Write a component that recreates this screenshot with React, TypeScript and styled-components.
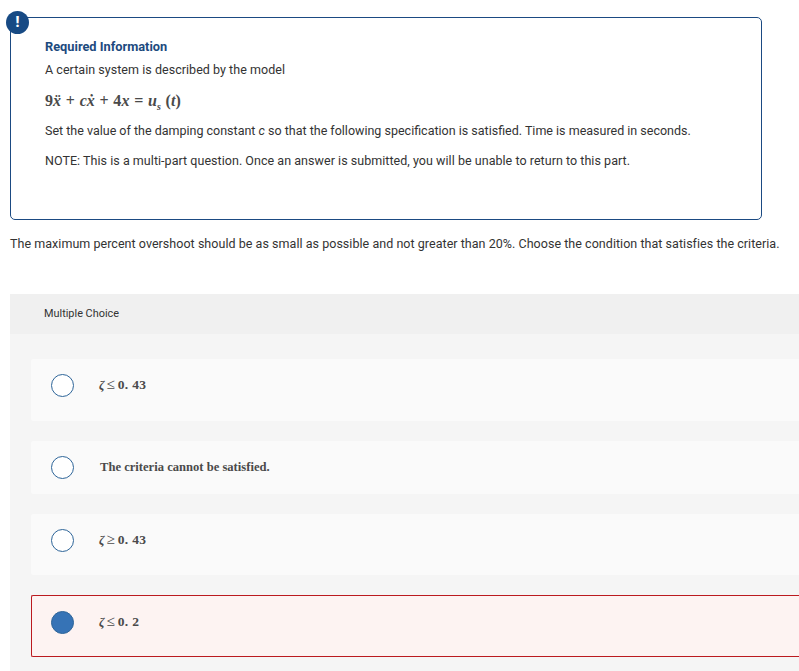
import React from "react";
import styled, { createGlobalStyle } from "styled-components";

const Global = createGlobalStyle`
  html, body { margin: 0; padding: 0; background: #fff; overflow: hidden; }
  #root { width: 799px; height: 671px; overflow: hidden; }
`;

const Page = styled.div`
  width: 799px;
  height: 671px;
  padding: 17px 0 0 10px;
  box-sizing: border-box;
  font-family: Roboto, Lato, sans-serif;
  font-size: 12.5px;
  color: #333;
  overflow: hidden;
`;

const InfoBox = styled.section`
  position: relative;
  box-sizing: border-box;
  width: 752px;
  height: 203px;
  border: 1px solid #1b4a82;
  border-radius: 5px;
  padding: 20px 34px 0;
`;

const Badge = styled.div`
  position: absolute;
  left: -5px;
  top: -7px;
  width: 23px;
  height: 23px;
  border-radius: 50%;
  background: #174a84;
  color: #fff;
  font-weight: 900;
  font-size: 14px;
  line-height: 22px;
  text-align: center;
`;

const Title = styled.h3`
  margin: 0;
  font-size: 12.8px;
  line-height: 17px;
  font-weight: 700;
  color: #1c4a7e;
`;

const Para = styled.p<{ $top: number; $track?: number }>`
  margin: ${(p) => p.$top}px 0 0;
  line-height: 17px;
  letter-spacing: ${(p) => p.$track ?? 0.04}px;
  white-space: nowrap;
`;

const Equation = styled.div`
  margin-top: 13px;
  height: 20px;
  font-family: "Liberation Serif", serif;
  font-size: 16px;
  font-weight: 700;
  line-height: 20px;
  letter-spacing: 0.1px;
  word-spacing: 0.5px;
  color: #4a4a4a;
  white-space: nowrap;
`;

const Question = styled.p`
  margin: 15px 0 0;
  line-height: 17px;
  letter-spacing: 0.04px;
  white-space: nowrap;
`;

const ChoicePanel = styled.section`
  margin-top: 42px;
  width: 789px;
  height: 377px;
  background: #f5f5f5;
`;

const PanelHeader = styled.div`
  box-sizing: border-box;
  height: 40px;
  background: #f0f0f0;
  padding-left: 34px;
  font-size: 10.9px;
  line-height: 39px;
`;

const OptionList = styled.div`
  display: flex;
  flex-direction: column;
  gap: 20px;
  padding: 25px 0 0 21px;
`;

const Option = styled.div<{ $h: number; $wrong?: boolean }>`
  box-sizing: border-box;
  display: flex;
  align-items: flex-start;
  gap: 25px;
  height: ${(p) => p.$h}px;
  padding: ${(p) => (p.$wrong ? "15px 0 0 19px" : "15px 0 0 20px")};
  background: ${(p) => (p.$wrong ? "#fdf3f2" : "#fafafa")};
  border: ${(p) => (p.$wrong ? "1px solid #bb1a1f" : "none")};
  border-right: none;
  border-radius: 2px 0 0 2px;
`;

const Radio = styled.span<{ $on?: boolean }>`
  box-sizing: border-box;
  flex: none;
  width: 23px;
  height: 23px;
  border-radius: 50%;
  border: 1px solid #2e6599;
  background: ${(p) => (p.$on ? "#3673b6" : "#fff")};
`;

const MathText = styled.span`
  font-family: "Liberation Serif", serif;
  font-size: 12.6px;
  font-weight: 700;
  line-height: 21px;
  color: #4a4a4a;
  white-space: nowrap;
`;

const ProseText = styled(MathText)`
  margin-left: 1px;
  line-height: 23px;
`;

const Italic = styled.i`
  font-weight: 700;
`;

const Symbol = styled.span`
  font-weight: 400;
  font-size: 15px;
  margin: 0 3px 0 2px;
`;

const Number = styled.span`
  font-size: 13.5px;
  letter-spacing: 0.3px;
`;

const Sub = styled.sub`
  font-size: 10px;
  line-height: 0;
`;

export default function App() {
  return (
    <Page>
      <Global />
      <InfoBox>
        <Badge>!</Badge>
        <Title>Required Information</Title>
        <Para $top={6}>A certain system is described by the model</Para>
        <Equation>
          9<Italic>ẍ</Italic> + <Italic>cẋ</Italic> + 4<Italic>x</Italic> = <Italic>u</Italic>
          <Sub><Italic>s</Italic></Sub> (<Italic>t</Italic>)
        </Equation>
        <Para $top={11} $track={0}>
          Set the value of the damping constant <em>c</em> so that the following specification is satisfied. Time is measured in seconds.
        </Para>
        <Para $top={13}>
          NOTE: This is a multi-part question. Once an answer is submitted, you will be unable to return to this part.
        </Para>
      </InfoBox>
      <Question>
        The maximum percent overshoot should be as small as possible and not greater than 20%. Choose the condition that satisfies the criteria.
      </Question>
      <ChoicePanel>
        <PanelHeader>Multiple Choice</PanelHeader>
        <OptionList>
          <Option $h={62}>
            <Radio />
            <MathText><Italic>ζ</Italic><Symbol>≤</Symbol><Number>0. 43</Number></MathText>
          </Option>
          <Option $h={53}>
            <Radio />
            <ProseText>The criteria cannot be satisfied.</ProseText>
          </Option>
          <Option $h={61}>
            <Radio />
            <MathText><Italic>ζ</Italic><Symbol>≥</Symbol><Number>0. 43</Number></MathText>
          </Option>
          <Option $h={62} $wrong>
            <Radio $on />
            <MathText><Italic>ζ</Italic><Symbol>≤</Symbol><Number>0. 2</Number></MathText>
          </Option>
        </OptionList>
      </ChoicePanel>
    </Page>
  );
}
